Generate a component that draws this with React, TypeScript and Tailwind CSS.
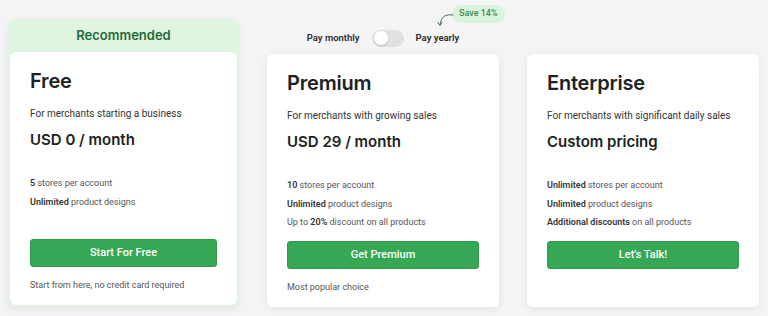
import React, {useState} from 'react'

type Plan = {
  name: string,
  description: string,
  price: string,
  features: React.ReactNode[],
  cta: string,
  note?: string,
};

const plans: Plan[] = [
  {
    name: 'Free',
    description: 'For merchants starting a business',
    price: 'USD 0 / month',
    features: [
      <><b className="font-semibold text-[#333]">5</b> stores per account</>,
      <><b className="font-semibold text-[#333]">Unlimited</b> product designs</>,
    ],
    cta: 'Start For Free',
    note: 'Start from here, no credit card required',
  },
  {
    name: 'Premium',
    description: 'For merchants with growing sales',
    price: 'USD 29 / month',
    features: [
      <><b className="font-semibold text-[#333]">10</b> stores per account</>,
      <><b className="font-semibold text-[#333]">Unlimited</b> product designs</>,
      <>Up to <b className="font-semibold text-[#333]">20%</b> discount on all products</>,
    ],
    cta: 'Get Premium',
    note: 'Most popular choice',
  },
  {
    name: 'Enterprise',
    description: 'For merchants with significant daily sales',
    price: 'Custom pricing',
    features: [
      <><b className="font-semibold text-[#333]">Unlimited</b> stores per account</>,
      <><b className="font-semibold text-[#333]">Unlimited</b> product designs</>,
      <><b className="font-semibold text-[#333]">Additional discounts</b> on all products</>,
    ],
    cta: "Let's Talk!",
  },
];

const PlanCard: React.FC<{plan: Plan, className?: string}> = ({plan, className}) => {
  return (
    <div className={`h-[253px] bg-white rounded-md px-[20px] pt-[17px] flex flex-col ${className ?? ''}`}>
      <h2 className="font-['Inter',sans-serif] font-semibold text-[20px] leading-[24px] text-[#1b2222] tracking-[-0.2px]">{plan.name}</h2>
      <p className="mt-[14px] text-[10px] leading-[14px] text-[#333]">{plan.description}</p>
      <p className="mt-[9px] font-['Inter',sans-serif] font-semibold text-[15px] leading-[20px] text-[#1b2222]">{plan.price}</p>
      <ul className="mt-[24px] h-[55px] text-[9px] leading-[18.5px] text-[#555]">
        {plan.features.map((f, i) => (
          <li key={i}>{f}</li>
        ))}
      </ul>
      <button
        type="button"
        className="mt-[10px] h-[28px] w-full rounded-[3px] bg-[#36a855] border border-[#2f9c4c] text-white text-[11px] font-medium"
      >
        {plan.cta}
      </button>
      {plan.note && (
        <p className="mt-[11px] text-[9px] leading-[14px] text-[#555]">{plan.note}</p>
      )}
    </div>
  );
}

const BillingToggle: React.FC = () => {
  const [yearly, setYearly] = useState(false);
  return (
    <div className="relative flex items-center justify-center gap-[12px] h-[18px] mb-[7px] font-['Roboto',sans-serif] text-[9.5px] font-semibold text-[#2a2a2a]">
      <span>Pay monthly</span>
      <button
        type="button"
        onClick={() => setYearly(!yearly)}
        className={`relative w-[32px] h-[17px] rounded-full bg-[#dfe0e1] flex items-center px-[2px] ${yearly ? 'justify-end' : 'justify-start'}`}
      >
        <span className="block w-[14px] h-[14px] rounded-full bg-white shadow-[0_1px_2px_rgba(0,0,0,0.15)]" />
      </button>
      <span>Pay yearly</span>
      <div className="absolute left-[calc(50%+69px)] -top-[24px] h-[18px] px-[7px] whitespace-nowrap rounded-full bg-[#d9f4dc] text-[#3f8b57] text-[9px] font-medium flex items-center">
        Save 14%
      </div>
      <svg className="absolute left-[calc(50%+52px)] -top-[17px]" width="19" height="16" viewBox="0 0 19 16" fill="none">
        <path d="M18 3 C 11 2, 6 4, 5 13" stroke="#3f6b50" strokeWidth="1" strokeLinecap="round" />
        <path d="M2.8 10.5 L5 13.5 L7 10.4" stroke="#3f6b50" strokeWidth="1" strokeLinecap="round" strokeLinejoin="round" />
      </svg>
    </div>
  );
}

export default function App() {
  return (
    <div className="w-[768px] h-[316px] bg-[#f4f4f4] font-['Roboto',sans-serif] flex items-end gap-[28px] pl-[8px] pb-[9px]">
      <div className="w-[231px] rounded-lg bg-[#dff5df] px-[2px] pb-[2px] shadow-[0_2px_8px_rgba(0,0,0,0.07)]">
        <div className="h-[33px] flex items-center justify-center font-['Inter',sans-serif] text-[13px] font-semibold text-[#1f6a3c]">
          Recommended
        </div>
        <PlanCard plan={plans[0]} className="px-[19px]" />
      </div>
      <div className="w-[232px] flex flex-col">
        <BillingToggle />
        <PlanCard plan={plans[1]} className="shadow-[0_2px_8px_rgba(0,0,0,0.07)]" />
      </div>
      <div className="w-[232px]">
        <PlanCard plan={plans[2]} className="shadow-[0_2px_8px_rgba(0,0,0,0.07)]" />
      </div>
    </div>
  )
}
